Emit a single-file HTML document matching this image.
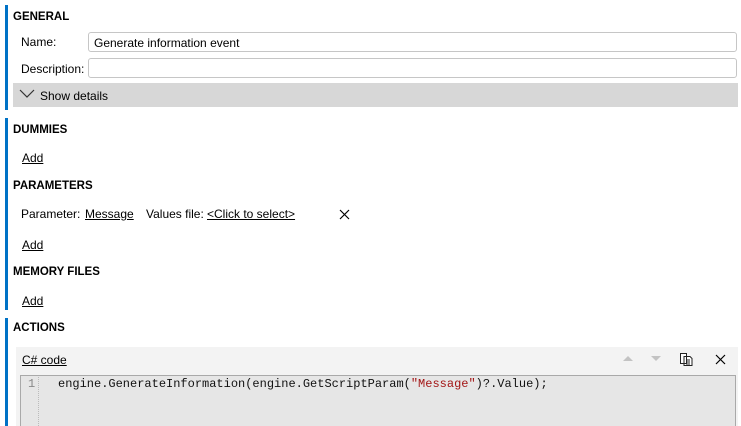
<!DOCTYPE html>
<html><head><style>
body{margin:0;width:741px;height:426px;overflow:hidden;background:#fff;font-family:"Liberation Sans",sans-serif;font-size:12px;color:#000;position:relative}
.a{position:absolute;white-space:nowrap}
.bar{position:absolute;left:5px;width:3px;background:#0072c6}
.h{position:absolute;font-weight:bold;font-size:11.5px;left:13px}
.u{text-decoration:underline}
.in{position:absolute;left:88px;width:649px;height:20px;border:1px solid #c6c6c6;border-radius:3px;background:#fff;box-sizing:border-box}
</style></head><body>
<div class="bar" style="top:5px;height:105px"></div>
<div class="bar" style="top:118px;height:192px"></div>
<div class="bar" style="top:318px;height:108px"></div>

<div class="h" style="top:11px">GENERAL</div>
<div class="a" style="left:21px;top:35px">Name:</div>
<div class="in" style="top:32px"><span class="a" style="left:5px;top:3px">Generate information event</span></div>
<div class="a" style="left:21px;top:62px">Description:</div>
<div class="in" style="top:58px"></div>
<div class="a" style="left:13px;top:83px;width:725px;height:24px;background:#d7d7d7"></div>
<svg class="a" style="left:19px;top:89px" width="16" height="10"><path d="M1 1 L8 8 L15 1" fill="none" stroke="#333" stroke-width="1.2"/></svg>
<div class="a" style="left:40px;top:89px">Show details</div>

<div class="h" style="top:124px">DUMMIES</div>
<div class="a u" style="left:22px;top:151px">Add</div>
<div class="h" style="top:180px">PARAMETERS</div>
<div class="a" style="left:21px;top:207px">Parameter:</div>
<div class="a u" style="left:85px;top:207px">Message</div>
<div class="a" style="left:146px;top:207px">Values file:</div>
<div class="a u" style="left:207px;top:207px">&lt;Click to select&gt;</div>
<svg class="a" style="left:339px;top:209px" width="11" height="11"><path d="M1 1L10 10M10 1L1 10" stroke="#000" stroke-width="1.2"/></svg>
<div class="a u" style="left:22px;top:238px">Add</div>
<div class="h" style="top:266px">MEMORY FILES</div>
<div class="a u" style="left:22px;top:294px">Add</div>

<div class="h" style="top:322px">ACTIONS</div>
<div class="a" style="left:16px;top:347px;width:722px;height:79px;background:#f3f3f3"></div>
<div class="a u" style="left:22px;top:353px">C# code</div>
<svg class="a" style="left:622px;top:355px" width="12" height="8"><path d="M1 6L6 1L11 6Z" fill="#c3c3c3"/></svg>
<svg class="a" style="left:650px;top:355px" width="12" height="8"><path d="M1 1L6 6L11 1Z" fill="#c3c3c3"/></svg>
<svg class="a" style="left:679px;top:352px" width="15" height="15"><path d="M1.5 1.5h6v10h-6z M5 4.5h6l2 2v7h-8z M7 8h4M7 10h4M7 12h4" fill="#fff" stroke="#222" stroke-width="1"/></svg>
<svg class="a" style="left:715px;top:354px" width="11" height="11"><path d="M1 1L10 10M10 1L1 10" stroke="#000" stroke-width="1.2"/></svg>
<div class="a" style="left:20px;top:375px;width:716px;height:51px;background:#e6e6e6;border:1px solid #a9a9a9;border-bottom:none;box-sizing:border-box"></div>
<div class="a" style="left:38px;top:377px;height:49px;border-left:1px dotted #bbb"></div>
<div class="a" style="left:28px;top:377px;font-family:'Liberation Mono',monospace;font-size:12px;color:#888">1</div>
<div class="a" style="left:58px;top:377px;font-family:'Liberation Mono',monospace;font-size:12px;color:#111">engine.GenerateInformation(engine.GetScriptParam(<span style="color:#a31515">"Message"</span>)?.Value);</div>
</body></html>
